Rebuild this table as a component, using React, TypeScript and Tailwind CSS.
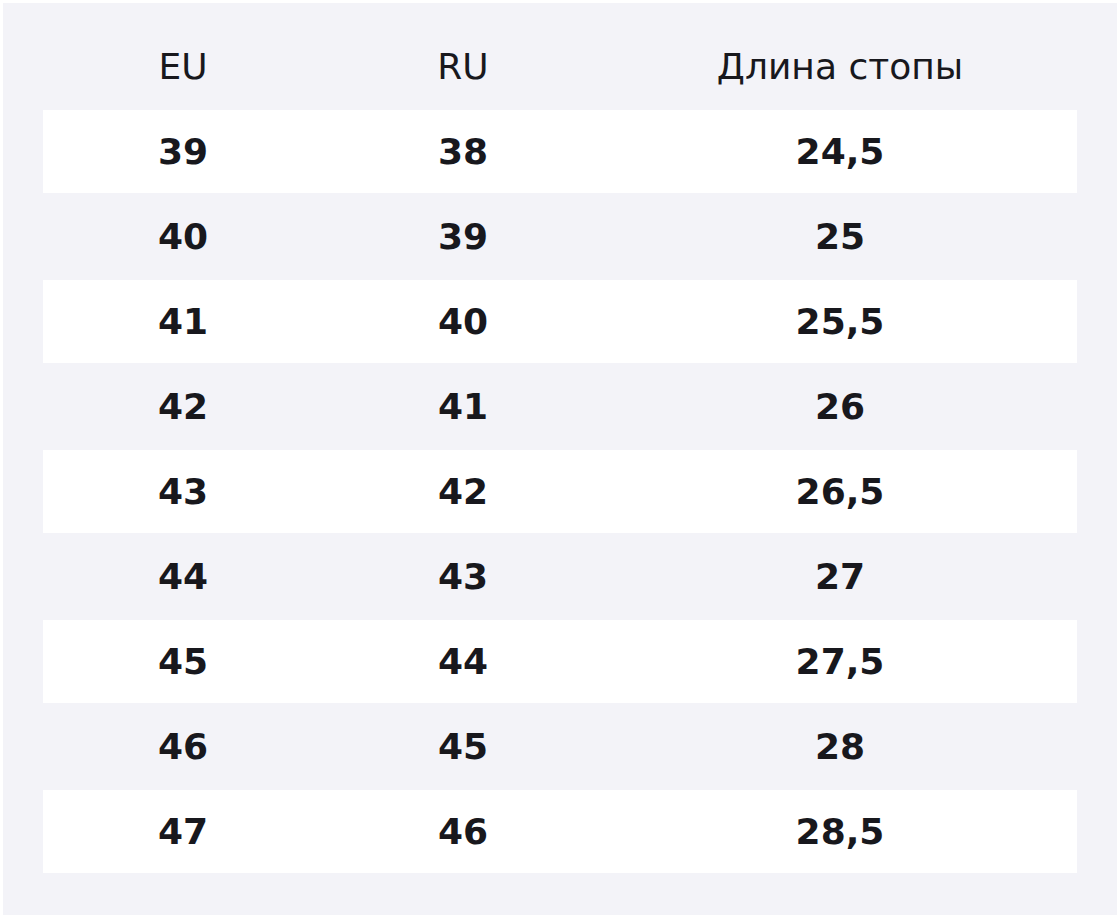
import React from "react";

const rows: [string, string, string][] = [
  ["39", "38", "24,5"],
  ["40", "39", "25"],
  ["41", "40", "25,5"],
  ["42", "41", "26"],
  ["43", "42", "26,5"],
  ["44", "43", "27"],
  ["45", "44", "27,5"],
  ["46", "45", "28"],
  ["47", "46", "28,5"],
];

export default function App() {
  return (
    <div className="min-h-screen bg-white p-[3px] font-['DejaVu_Sans',sans-serif] text-[#18181d]">
      <div className="w-[1114px] h-[912px] bg-[#f3f3f8] px-10 pt-5 pb-[42px]">
        <div className="grid grid-cols-[280px_280px_1fr] h-[87px] items-center text-center text-[36px]">
          <div>EU</div>
          <div>RU</div>
          <div>Длина стопы</div>
        </div>
        {rows.map((r, i) => (
          <div
            key={r[0]}
            className={
              i % 2 === 0
                ? "grid grid-cols-[280px_280px_1fr] h-[83px] items-center text-center text-[36px] font-bold bg-white"
                : "grid grid-cols-[280px_280px_1fr] h-[87px] items-center text-center text-[36px] font-bold"
            }
          >
            <div>{r[0]}</div>
            <div>{r[1]}</div>
            <div>{r[2]}</div>
          </div>
        ))}
      </div>
    </div>
  );
}
